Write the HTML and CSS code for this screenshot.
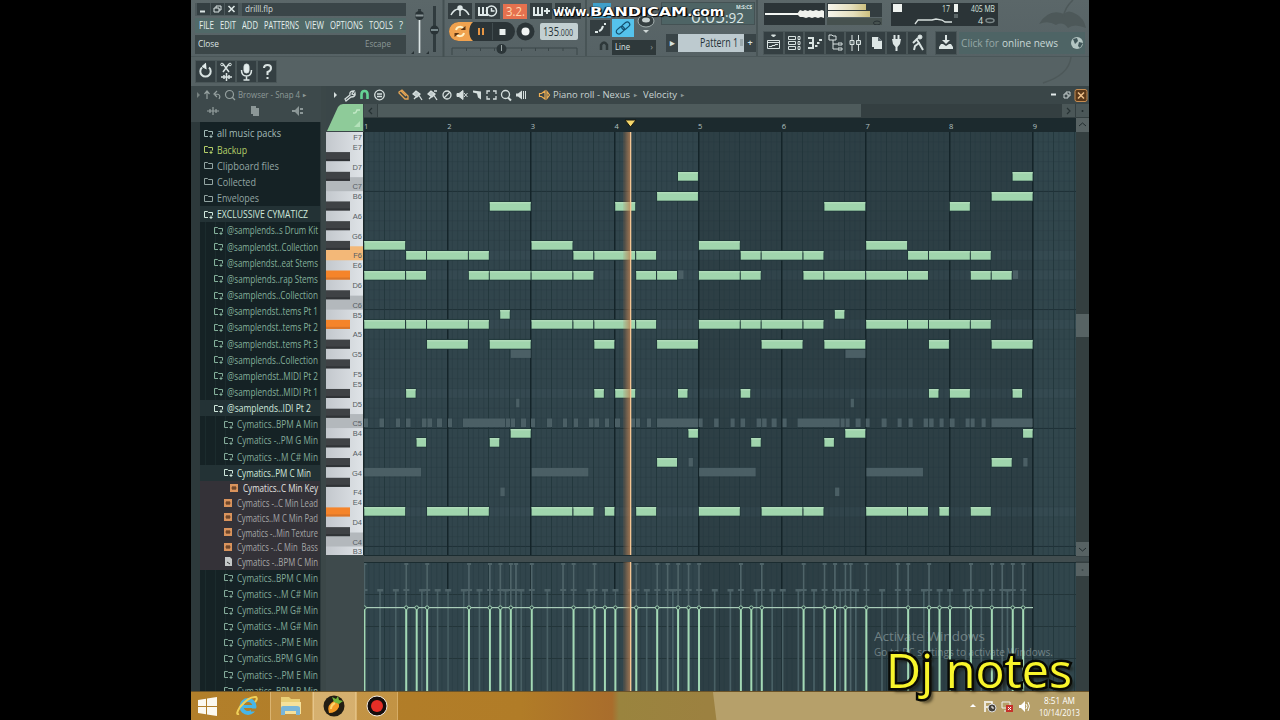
FILE: index.html
```html
<!DOCTYPE html>
<html lang="en">
<head>
    <meta charset="UTF-8">
    <meta name="viewport" content="width=device-width, initial-scale=1.0">
    <title>drilll.flp</title>
    <link rel="stylesheet" href="styles.css">
</head>
<body>
    <div class="desktop">
        <div class="topbar">
            <div class="title-panel">
                <div class="title-row">
                    <svg class="win-btn" viewBox="0 0 13 12"><path d="M3 8.5h5" stroke-width="2"/></svg>
                    <svg class="win-btn" viewBox="0 0 13 12"><path d="M3 5h5v4H3zM5 5V3h5v4H8" /></svg>
                    <svg class="win-btn" viewBox="0 0 13 12"><path d="M3.5 3l6 6M9.5 3l-6 6" stroke-width="1.6"/></svg>
                    <div class="title"><span data-w="28">drilll.flp</span></div>
                </div>
                <div class="menu">
                    <span data-w="15">FILE</span><span data-w="16">EDIT</span><span data-w="16">ADD</span><span data-w="35">PATTERNS</span><span data-w="19">VIEW</span><span data-w="33">OPTIONS</span><span data-w="24">TOOLS</span><span data-w="4">?</span>
                </div>
                <div class="hint"><span data-w="21">Close</span><span class="dim" data-w="26">Escape</span></div>
            </div>
            <svg class="sliders" width="42" height="57">
                <path d="M13.5 9v44M28.5 6v46" stroke="#303b3e" stroke-width="3"/>
                <path d="M13.5 19v34" stroke="#dbe5e5" stroke-width="2"/>
                <circle cx="13.5" cy="15.5" r="4.5" fill="#293336"/><path d="M9.5 15.5h8" stroke="#8b9698" stroke-width="2"/>
                <circle cx="28.5" cy="30" r="4.5" fill="#293336"/><path d="M25 30h7" stroke="#77878a" stroke-width="2"/>
                <path d="M5 54l3-3v3M20 54l3-3v3" fill="#273134"/>
                <path d="M37.5 0v57" stroke="#445052" stroke-width="2"/>
            </svg>
            <div class="transport">
                <div class="row1">
                    <svg class="tbtn" width="24" height="16"><path d="M3 12Q6 6 11 6M21 12Q18 6 13 6M12 13V6" /><circle cx="12" cy="5" r="2" fill="#dfe9e9"/></svg>
                    <svg class="tbtn" width="25" height="16"><path d="M4 4v8h8V4M8 4v8" stroke-width="2"/><circle cx="16.5" cy="8" r="5"/><path d="M16.5 5v3h3"/></svg>
                    <div class="countdown"><span data-w="19">3.2.</span></div>
                    <svg class="tbtn" width="22" height="16"><path d="M4 4v8h8V4M8 4v8M14 8h6M17 5v6" stroke-width="2"/></svg>
                    <svg class="tbtn" width="26" height="16"><path d="M4 4v8h8V4M8 4v8M14 12l6-8" stroke-width="2"/></svg>
                </div>
                <div class="row2">
                    <svg width="66" height="19">
                        <rect width="66" height="19" rx="9.5" fill="#2b3437"/>
                        <path d="M9.5 0H24c-5 4-5 15 0 19H9.5a9.5 9.5 0 0 1 0-19" fill="#f0a24f"/>
                        <path d="M7 8c1-4 6-4 8-1M15 11c-1 4-6 4-8 1" stroke="#fff3c8" fill="none" stroke-width="2"/>
                        <path d="M11.5 8h5V4zM10.5 11h-5v4z" fill="#5d3513"/>
                        <path d="M30 6v7M34 6v7" stroke="#e79644" stroke-width="2"/>
                        <path d="M43.5 1v17" stroke="#414c4f"/><path d="M50.5 7h6v6h-6z" fill="#e9efee"/>
                    </svg>
                    <svg width="19" height="19"><circle cx="9.5" cy="9.5" r="9" fill="#2b3437"/><circle cx="9.5" cy="9.5" r="4" fill="#f1f4f3"/></svg>
                    <div class="tempo"><span class="bpm" data-w="16">135</span><span class="frac" data-w="14">.000</span></div>
                </div>
                <svg class="songpos" width="136" height="16">
                    <path d="M4 14V7h125v7M18.5 7v3M32.5 7v3M46.5 7v3M73.5 7v3M87.5 7v3M100.5 7v3M115 7v3" fill="none" stroke="#3b4649"/>
                    <circle cx="53.5" cy="8" r="5" fill="#2b3538"/><path d="M53.5 4v6" stroke="#9aa5a5"/>
                </svg>
            </div>
            <div class="snap">
                <div class="row1"><div class="blue-btn"></div></div>
                <div class="row2">
                    <svg class="tbtn" width="20" height="16"><path d="M5 12h3M9 11q3-1 4-5M14 4h2" stroke-width="2"/></svg>
                    <svg class="link" width="22" height="18"><g transform="rotate(-40 11 9)"><rect x="3" y="6.5" width="9" height="5" rx="2.5"/><rect x="10" y="6.5" width="9" height="5" rx="2.5"/></g></svg>
                    <svg width="24" height="22"><ellipse cx="12" cy="4" rx="8" ry="6" fill="#343e40" stroke="#a3afaf"/><ellipse cx="12" cy="3" rx="4" ry="2.5" fill="#c6cfce"/><path d="M9 13h6l-3 3z" fill="#cdd6d5"/></svg>
                </div>
                <div class="row3">
                    <svg width="10" height="12"><path d="M2 10V5q3-5 6 0v5" fill="none" stroke="#2e383a" stroke-width="2.5"/></svg>
                    <div class="line-select"><span data-w="15">Line</span><b>›</b></div>
                </div>
            </div>
            <div class="time-panel">
                <div class="time"><span class="clock" data-w="34">0:05</span><span class="cs" data-w="19">:92</span><i><span data-w="16">M:S:CS</span></i></div>
                <div class="pattern"><b>▸</b><div class="pattern-name"><span data-w="38">Pattern 1</span><em></em></div><b>+</b></div>
            </div>
            <div class="right-panel">
                <div class="monitors">
                    <svg width="61" height="22"><rect width="61" height="22" fill="#2b3437"/><path d="M1 11h34" stroke="#f3f6f3" stroke-width="2"/><path d="M33 11l3-4 3 1 2-1 3 1 2-1 3 1 3-1 3 1 3-1 2 1v7l-3-1-3 1-3-1-3 1-3-1-3 1-3-1-3 0z" fill="#f0f2ee"/></svg>
                    <svg width="55" height="22"><rect width="55" height="14" fill="#333d40"/><rect y="15" width="55" height="7" fill="#46514f"/><rect x="1" y="1" width="38" height="6" fill="url(#m)"/><rect x="1" y="8" width="42" height="6" fill="url(#m)"/><ellipse cx="50" cy="20" rx="3.5" ry="2" fill="none" stroke="#273033"/><defs><linearGradient id="m"><stop stop-color="#f6f5ec"/><stop offset=".6" stop-color="#e5dfbd"/><stop offset="1" stop-color="#cdc07f"/></linearGradient></defs></svg>
                    <div class="cpu">
                        <svg width="62" height="23"><rect x="2" y="1" width="9" height="8" fill="#eef2ef"/><path d="M24 21l3-4h14l4-1 6 1 3 2h7" fill="none" stroke="#d8e0de" stroke-width="1.3"/><text x="51" y="9" textLength="8" lengthAdjust="spacingAndGlyphs">17</text></svg>
                        <svg width="45" height="23"><path d="M1 1h4v8H1z" fill="#eef2ef"/><path d="M1 11h4v4H1z" fill="#5a6567"/><text x="18" y="9" textLength="24" lengthAdjust="spacingAndGlyphs">405 MB</text><text x="25" y="21">4</text><ellipse cx="37" cy="17.5" rx="4" ry="2" fill="none" stroke="#7d898a" stroke-width="1.5"/></svg>
                    </div>
                </div>
                <div class="shortcuts">
                    <svg class="sbtn"><path d="M3.5 8.5h12v8h-12zM3.5 10.5h12M5 14.5h3v-1h3v-1h3"/><path d="M7.5 3h4l-2 2z" fill="#d9e3e2"/></svg>
                    <svg class="sbtn"><path d="M3.5 4.5h7v3h-7zM3.5 9.5h7v3h-7zM3.5 14.5h7v3h-7zM13 4.5h2v3h-2zM13 9.5h2v3h-2zM13 14.5h2v3h-2z"/></svg>
                    <svg class="sbtn"><path d="M3 6h5v10H3M4 11h4" stroke-width="2"/><path d="M10 14h2.5M12 11h2.5M14 8h3" stroke-width="2"/></svg>
                    <svg class="sbtn"><path d="M3 3h3l1 1h3v4H3zM7 8v9h4M7 12h4M12 11h4v2h-4zM12 16h4v2h-4z"/></svg>
                    <svg class="sbtn"><path d="M6 3v16M12.5 3v16"/><path d="M4 8.5h4v4H4zM10.5 8.5h4v4h-4z" fill="#5d6a6c"/></svg>
                    <svg class="sbtn fill"><path d="M5 5h6l4 4v8H7v-2H5z"/><path d="M11 5v4h4" fill="#59656a"/></svg>
                    <svg class="sbtn fill"><path d="M5 7h9l-1 5-2.5 3v4h-2v-4L6 12zM6.5 3h2v4h-2zM10.5 3h2v4h-2z"/></svg>
                    <svg class="sbtn"><circle cx="12" cy="5" r="2" fill="#dde6e5"/><path d="M10 6l-5 5M9 8l2 3-4 3-1 4M11 11l4 7" stroke-width="2"/></svg>
                    <svg class="sbtn fill download"><path d="M9 3h2v5h3l-4 4-4-4h3zM5 12l-2 3v2h14v-2l-2-3h-2l-3 2-3-2z"/></svg>
                    <div class="news"><span data-w="38">Click for</span><span class="lit" data-w="56">online news</span><svg width="14" height="14"><circle cx="7" cy="7" r="6" fill="#b4c6c3"/><path d="M3 3l4-1 1 3-3 3zM9 6l4 1-3 5-2-2z" fill="#41575a"/></svg></div>
                </div>
            </div>
            <svg class="leaf" width="54" height="85"><path d="M4 24q10-16 25-10 4-5 12 0 8 4 10 14-12-5-18 0-5-7-12-3-8-5-17-1z" fill="#4d5859"/><path d="M28 18Q30 7 38 0M8 83Q34 75 36 57" stroke="#4d5859" stroke-width="1.5" fill="none"/></svg>
            <div class="watermark"><span data-w="37">www.</span><span class="big" data-w="97">BANDICAM</span><span data-w="37">.com</span></div>
        </div>

        <div class="toolbar">
            <svg class="sbtn tool"><path d="M6 6.5a5.2 5.2 0 1 0 7 0" stroke-width="2"/><path d="M10 2L6 5.5 10.5 8" fill="#e3ecec"/></svg>
            <svg class="sbtn tool"><path d="M6 3l6 8M12 3l-6 8M4 16h11M7 14v4M9.5 12v8M12 14v4" stroke-width="1.5"/><circle cx="5" cy="3.5" r="1.3"/><circle cx="13" cy="3.5" r="1.3"/></svg>
            <svg class="sbtn tool"><rect x="7" y="3" width="5" height="9" rx="2.5" fill="#e3ecec"/><path d="M4.5 9q0 6 5 6t5-6M9.5 15v4M6.5 19h6" stroke-width="1.5"/></svg>
            <svg class="sbtn tool"><path d="M6 7q0-3 3.5-3T13 7t-3.5 4v3M9.5 16v2" stroke-width="2"/></svg>
        </div>

        <div class="main">
            <div class="browser">
                <div class="browser-head">
                    <div class="browser-title">
                        <svg width="42" height="14"><path d="M2 4l3 3-3 3z" fill="#75807f"/><path d="M12 11V3M9.5 6L12 3l2.5 3M24 11q3-5-4-5M22 3l-3 3 3 3" class="ico"/><circle cx="34.5" cy="6.5" r="4" class="ico"/><path d="M37 9l3 3" class="ico"/></svg>
                        <span data-w="62">Browser - Snap 4</span><b>▸</b>
                    </div>
                    <div class="browser-tabs">
                        <svg width="14" height="12"><path d="M1 6h12M4 4v4M7 2v8M10 4v4" class="ico"/></svg>
                        <svg width="12" height="12"><path d="M1 1h5v2h3v8H3V9H1z" fill="#8c9797"/></svg>
                        <svg width="14" height="12"><path d="M1 5h3l4-4v10L4 7H1zM9 3h3v2H9zM9 7h3v2H9z" fill="#8c9797"/></svg>
                    </div>
                </div>
                <div class="list" id="list"></div>
            </div>

            <div class="roll">
                <div class="roll-head">
                    <svg width="212" height="18">
                        <g fill="none" stroke="#d5dedd" stroke-width="1.3">
                            <path d="M8 6l3 3-3 3z" fill="#d5dedd" stroke="none"/>
                            <path d="M19 13l5-4q-1-4 4-4l-2 3 2 1 1-2q1 4-4 4l-5 4z"/>
                            <path d="M35.5 13V8.5q0-3.5 3-3.5t3 3.5V13" stroke="#65d494" stroke-width="2.6"/>
                            <circle cx="53.5" cy="9" r="4.8"/><path d="M51 8h5M51 10.5h5"/>
                            <path d="M73 6l3-2 6 6v3h-3l-6-6zM75 5l5 5" stroke="#e3a454"/>
                            <path d="M87 8l3-3 4 3-3 3zM92 8l4 6M88 13l3-3" fill="#bdc8c8"/>
                            <path d="M102 8l3-3 4 3-3 3zM107 8l4 6M103 13l3-3M108 5h3" fill="#bdc8c8"/>
                            <circle cx="121" cy="9" r="4"/><path d="M118 12l6-6"/>
                            <path d="M131 7.5h2l4-3v9l-4-3h-2zM138 7l3.5 4M141.5 7l-3.5 4" fill="#d5dedd" stroke-width="1"/>
                            <path d="M147 4.5l8 1v8l-3-2-1-4-4-1z" fill="#d5dedd" stroke-width="0"/>
                            <path d="M161 8V5h3M167 5h3v3M170 10v3h-3M164 13h-3v-3"/>
                            <circle cx="179.5" cy="8.5" r="4"/><path d="M182 11.5l3 3" stroke-width="2"/>
                            <path d="M190 7.5h2l4-3v9l-4-3h-2z" fill="#d5dedd" stroke-width="0"/><path d="M197.5 5v8M199.5 5v8" stroke-width="1"/>
                        </g>
                    </svg>
                    <svg width="14" height="18"><path d="M1.5 7.5h2L7 5v8l-3.5-2.5h-2zM9 5.5L11.5 9 9 12.5z" fill="none" stroke="#f0b053" stroke-width="1.2"/></svg>
                    <span data-w="77">Piano roll - Nexus</span><b>▸</b><span data-w="34">Velocity</span><b>▸</b>
                    <svg class="roll-win" width="40" height="18"><path d="M3 8.5h5" stroke="#e3eaea" stroke-width="2"/><path d="M16 8h4v4h-4zM18 8V6h4v4h-2" fill="none" stroke="#c9d2d2"/><rect x="27" y="3.5" width="12" height="12" rx="2" fill="#5a3819" stroke="#c58b50"/><path d="M30 6.5l6 6M36 6.5l-6 6" stroke="#f0c089" stroke-width="1.5"/></svg>
                </div>
                <div class="roll-body">
                    <svg id="keys" width="38" height="587"></svg>
                    <svg id="grid" width="712" height="587"></svg>
                    <svg class="vscroll" width="13" height="587">
                        <rect width="13" height="587" fill="#343f40"/>
                        <rect width="13" height="13" fill="#4b5758"/><circle cx="6.5" cy="7" r="1" fill="#202b2d"/>
                        <rect y="14" width="13" height="14" fill="#576263"/><path d="M3 22l3.5-3 3.5 3" fill="none" stroke="#202b2d"/>
                        <rect y="210" width="13" height="23" fill="#576364"/>
                        <rect y="438" width="13" height="14" fill="#576263"/><path d="M3 444l3.5 3 3.5-3" fill="none" stroke="#202b2d"/>
                        <path d="M0 455h13" stroke="#414d4f" stroke-width="5"/>
                        <rect y="459" width="13" height="13" fill="#576263"/><circle cx="6.5" cy="466" r="1" fill="#3a4648"/>
                    </svg>
                </div>
            </div>
        </div>

        <div class="taskbar">
            <svg class="task" width="41" height="29"><path d="M7 8l8-1.200V14H7zM16 6.600L26 5v9H16zM7 15h8v7.200L7 21zM16 15h10v9l-10-1.600z" fill="#fbf8ef"/></svg>
            <svg class="task" width="38" height="29"><circle cx="16" cy="14.5" r="6.5" fill="none" stroke="#48b6e8" stroke-width="4"/><path d="M10 14.5h14" stroke="#48b6e8" stroke-width="3"/><path d="M19 16.5h8v3h-8z" fill="#b17e29"/><path d="M7 22Q3 23 8 15 17 4 24 5q2 2-1 5" fill="none" stroke="#f0d15a" stroke-width="2"/></svg>
            <svg class="task open" width="43" height="28"><path d="M10 5h8l2 2h9v15H10z" fill="#e9cf77"/><path d="M10 10h20v12H10z" fill="#f5e19b"/><path d="M10 23v-7q0-2 2-2h14q3 0 3 2v7h-4v-4H14v4z" fill="#79b6d9"/></svg>
            <svg class="task open active" width="43" height="28"><circle cx="20" cy="14" r="10.5" fill="#231d13"/><path d="M15 21q-3-8 5-12 6 1 5 6-3 6-10 6" fill="#f39a26"/><path d="M17 17q0-4 4-6" stroke="#fbd46c" stroke-width="2" fill="none"/><path d="M20 10l-2-5 4 2 2-3 1 4 4 1-4 3z" fill="#72b63b"/></svg>
            <svg class="task open" width="42" height="28"><circle cx="20" cy="14" r="10" fill="#150d0c" stroke="#f1e9de"/><circle cx="20" cy="14" r="6" fill="#e52e26"/></svg>
            <div class="tray">
                <svg width="62" height="18"><path d="M2 10l3-3 3 3z" fill="#fff"/><path d="M17 4v11M18 5h6v5h-6" stroke="#fff" stroke-width="1.5" fill="none"/><circle cx="24" cy="11" r="4" fill="#44403a" stroke="#ddd"/><path d="M24 9v2h2" stroke="#fff" fill="none"/><path d="M34 5h8v6h-8zM36 14h5" stroke="#eee" fill="none"/><rect x="38" y="8" width="7" height="7" fill="#c6322b"/><path d="M40 10l3 3M43 10l-3 3" stroke="#fff"/><path d="M51 8h2l4-4v11l-4-4h-2z" fill="#fff"/><path d="M58 7q2 2 0 5M60 5q3 4 0 9" stroke="#fff" fill="none"/></svg>
                <div class="date"><span data-w="31">8:51 AM</span><span data-w="41">10/14/2013</span></div>
            </div>
        </div>

        <div class="activate"><p><span data-w="111">Activate Windows</span></p><p class="small"><span data-w="179">Go to PC settings to activate Windows.</span></p></div>
        <div class="caption"><span data-w="186">Dj notes</span></div>
    </div>
    <script src="script.js"></script>
</body>
</html>
```

FILE: styles.css
```css
body {
    margin: 0;
    background: #000;
    font-family: "Open Sans", "Noto Sans", sans-serif;
    overflow: hidden;
}
span[data-w] {
    display: inline-block;
    white-space: nowrap;
    transform-origin: 0 50%;
}
svg {
    display: block;
    flex: none;
}
p {
    margin: 0;
}
.desktop {
    position: relative;
    width: 898px;
    height: 720px;
    margin-left: 191px;
    background: #566264;
    overflow: hidden;
}

/* top bar */
.topbar {
    position: relative;
    display: flex;
    box-sizing: border-box;
    height: 57px;
    padding-left: 4px;
    background: linear-gradient(#5b6769, #566265);
    border-bottom: 1px solid #4b5759;
}
.title-panel {
    width: 211px;
    padding-top: 3px;
}
.title-row {
    display: flex;
    gap: 1px;
    height: 13px;
    padding-left: 2px;
    background: #4c585b;
}
.win-btn {
    width: 13px;
    height: 12px;
    background: #343f42;
    fill: none;
    stroke: #dbe5e4;
}
.title {
    flex: 1;
    margin-left: 3px;
    padding-left: 3px;
    background: #3a4548;
    color: #d3dddc;
    font-size: 9px;
    line-height: 12px;
}
.menu {
    display: flex;
    gap: 6px;
    height: 15px;
    margin-top: 2px;
    padding: 0 0 0 4px;
    background: #516968;
    color: #e4efec;
    font-size: 11px;
    line-height: 14px;
}
.hint {
    display: flex;
    justify-content: space-between;
    height: 19px;
    margin-top: 2px;
    padding: 0 15px 0 3px;
    background: #3b4648;
    color: #dde5e4;
    font-size: 9px;
    line-height: 18px;
}
.dim {
    color: #8b9797;
}
.transport {
    width: 137px;
    padding-top: 3px;
}
.row1,
.row2,
.row3 {
    display: flex;
    align-items: center;
}
.row1 {
    height: 16px;
    gap: 3px;
}
.row2 {
    height: 19px;
    margin-top: 3px;
}
.tbtn {
    background: #333d40;
    fill: none;
    stroke: #dfe9e9;
    stroke-width: 1.5px;
}
.countdown {
    width: 24px;
    height: 15px;
    padding-left: 3px;
    box-sizing: border-box;
    background: #e5714f;
    color: #ffd9b0;
    font-size: 13px;
    line-height: 14px;
}
.transport .row2 svg {
    margin-left: 1px;
}
.tempo {
    display: flex;
    width: 38px;
    height: 17px;
    margin-left: 5px;
    padding-left: 3px;
    box-sizing: border-box;
    border-radius: 2px;
    background: #c3d0d2;
    color: #273236;
    font-size: 13px;
    line-height: 16px;
}
.tempo .frac {
    font-size: 9px;
    line-height: 19px;
}
.snap {
    width: 74px;
    padding-top: 2px;
    border-left: 2px solid #485456;
}
.blue-btn {
    width: 18px;
    height: 15px;
    margin-left: 6px;
    background: #3f9fca;
}
.snap .row2 {
    margin-top: 0;
    padding-left: 3px;
}
.link {
    margin-left: 2px;
    background: #55c3ec;
    fill: none;
    stroke: #15506f;
    stroke-width: 1.2px;
}
.row3 {
    gap: 3px;
    padding-left: 12px;
}
.line-select {
    display: flex;
    justify-content: space-between;
    width: 38px;
    height: 15px;
    margin-top: 3px;
    padding: 0 3px;
    background: #2e383a;
    color: #dce5e4;
    font-size: 9px;
    line-height: 14px;
}
.line-select b {
    color: #8a9696;
    font-weight: normal;
}
.time-panel {
    width: 95px;
    padding-top: 2px;
}
.time {
    display: flex;
    position: relative;
    height: 23px;
    width: 94px;
    padding-left: 29px;
    box-sizing: border-box;
    background: #4e6465;
    border: 1px solid #445254;
    color: #dbe7e6;
    font-size: 19px;
    line-height: 26px;
}
.time .cs {
    font-size: 15px;
    line-height: 28px;
}
.time i {
    position: absolute;
    top: 1px;
    right: 2px;
    font: bold 6px/6px "Open Sans", sans-serif;
}
.pattern {
    display: flex;
    align-items: center;
    height: 19px;
    margin: 8px 0 0 5px;
}
.pattern b {
    width: 12px;
    height: 18px;
    background: #394447;
    color: #d8e1e0;
    font-size: 9px;
    line-height: 17px;
    text-align: center;
}
.pattern-name {
    display: flex;
    justify-content: flex-end;
    gap: 2px;
    width: 66px;
    height: 18px;
    background: #bdcacf;
    color: #253136;
    font-size: 12px;
    line-height: 17px;
}
.pattern em {
    width: 3px;
    height: 7px;
    margin: 5px 1px 0 0;
    background: #9ba9ad;
}
.right-panel {
    flex: 1;
    padding: 3px 0 0 6px;
    border-left: 2px solid #485456;
}
.monitors {
    display: flex;
    gap: 2px;
}
.cpu {
    display: flex;
    margin-left: 7px;
    background: #2b3437;
    font-size: 9px;
    fill: #d7e0df;
}
.shortcuts {
    display: flex;
    gap: 2px;
    height: 22px;
    margin-top: 6px;
}
.sbtn {
    width: 18.5px;
    height: 22px;
    background: #343f42;
    fill: none;
    stroke: #d9e3e2;
    outline: 1px solid #4a5658;
}
.fill {
    fill: #dde6e5;
    stroke: none;
}
.download {
    margin-left: 8px;
    width: 20px;
}
.news {
    display: flex;
    gap: 3px;
    align-items: center;
    width: 124px;
    margin-left: 1px;
    padding-left: 2px;
    background: #4e6465;
    color: #96a8a6;
    font-size: 10px;
}
.news .lit {
    color: #c9d8d6;
}
.news svg {
    margin-left: 9px;
}
.leaf {
    position: absolute;
    top: 0;
    right: 0;
    height: 85px;
    pointer-events: none;
}
.watermark {
    position: absolute;
    left: 362px;
    top: 2px;
    display: flex;
    color: #fff;
    font: bold 12.5px/20px "DejaVu Sans", sans-serif;
    text-shadow: 0 0 1px #000, 1px 1px 1px #000, -1px 0 1px #000;
}

.toolbar {
    display: flex;
    gap: 2px;
    height: 25px;
    padding: 4px 0 0 5px;
    background: #566264;
}
.toolbar .tool {
    height: 21px;
}

.main {
    display: flex;
    height: 605px;
}

/* browser */
.browser {
    width: 130px;
    border-right: 5px solid #3b4748;
    background: #2d393b;
    overflow: hidden;
}
.browser-head {
    height: 36px;
    background: #3d494b;
}
.browser-title {
    display: flex;
    align-items: center;
    height: 17px;
    padding-left: 4px;
    color: #8d9998;
    font-size: 9px;
}
.browser-title span {
    margin-left: 1px;
}
.browser-title b {
    margin-left: 3px;
    font-size: 6px;
}
.browser-tabs {
    display: flex;
    justify-content: space-between;
    padding: 2px 16px 0 15px;
}
.ico {
    fill: none;
    stroke: #95a09f;
    stroke-width: 1.2px;
}
.list {
    height: 566px;
    margin: 0 1px 0 9px;
    padding-top: 3.4px;
    background: #152225;
    color: #93a5a3;
    font-size: 11px;
}
.item {
    display: flex;
    align-items: center;
    box-sizing: border-box;
    height: 16.16px;
    line-height: 16px;
}
.item svg {
    margin-right: 4px;
}
.folder {
    fill: none;
    stroke: currentColor;
}
.level0 { padding-left: 4px; }
.level1 { padding-left: 14px; color: #84b09b; }
.level2 { padding-left: 24px; color: #84aa9a; }
.level3 { padding-left: 30px; }
.nested {
    background: repeating-linear-gradient(90deg, #1b2b2d 0 1px, transparent 1px 10px) 5px 0 / 22px 100% no-repeat;
}
.backup { color: #b4cf69; }
.soft { color: #a2bab6; }
.current {
    background: #233235;
    color: #d0e8dd;
}
.file {
    height: 14.8px;
    background: #343238;
    color: #a5a6a7;
}
.selected { color: #e3e3e1; }

/* piano roll */
.roll {
    width: 763px;
    background: #3a4648;
}
.roll-head {
    display: flex;
    align-items: center;
    position: relative;
    height: 18px;
    background: #3a4648;
    color: #c8d3d2;
    font-size: 9px;
}
.roll-head span {
    margin: -2px 0 0 1px;
}
.roll-head b {
    margin: -1px 4px 0 4px;
    width: 4px;
    font-size: 6px;
    color: #899595;
}
.roll-win {
    margin-left: auto;
    margin-right: 1px;
}
.roll-body {
    display: flex;
    height: 587px;
}
#keys text {
    font: 7.5px "Liberation Sans", Arial, sans-serif;
    fill: #565d63;
    text-anchor: end;
}
#grid text {
    font-size: 7.5px;
    fill: #b3c0c0;
}

/* windows taskbar */
.taskbar {
    display: flex;
    box-sizing: border-box;
    height: 29px;
    border-top: 1px solid #6c5429;
    background: linear-gradient(83deg, transparent 521px, #b6a06a 522px),
        linear-gradient(90deg, #b27f2a, #b17c27 330px, #a96d2c 421px, #9a843e 428px, #9c8140 515px);
}
.open {
    background: rgba(240, 205, 145, 0.28);
    border-left: 1px solid rgba(255, 230, 180, 0.4);
    border-right: 1px solid rgba(255, 230, 180, 0.3);
    box-sizing: border-box;
}
.active {
    background: rgba(250, 225, 180, 0.5);
}
.tray {
    display: flex;
    margin-left: auto;
    padding-right: 9px;
    gap: 9px;
}
.tray svg {
    margin-top: 5px;
}
.date {
    display: flex;
    flex-direction: column;
    align-items: center;
    color: #fff;
    font-size: 9px;
    line-height: 12px;
    padding-top: 3px;
}

.activate {
    position: absolute;
    left: 683px;
    top: 628px;
    color: rgba(180, 195, 196, 0.5);
    font-size: 13px;
    line-height: 17px;
}
.activate .small {
    font-size: 10px;
    line-height: 14px;
}
.caption {
    position: absolute;
    left: 695px;
    top: 638px;
    color: #f8f52b;
    font-size: 48px;
    font-weight: 500;
    line-height: 64px;
    -webkit-text-stroke: 5px #080a06;
    paint-order: stroke fill;
    text-shadow: 4px 4px 3px rgba(20, 18, 8, 0.6);
}
```

FILE: script.js
```js
// ---- browser list: level, kind, label, width, extra class ----
const items = [
    [0, "add", "all music packs", 64, "soft"],
    [0, "add", "Backup", 30, "backup"],
    [0, "dir", "Clipboard files", 62, ""],
    [0, "dir", "Collected", 39, ""],
    [0, "dir", "Envelopes", 42, ""],
    [0, "add", "EXCLUSSIVE CYMATICZ", 91, "current"],
    [1, "add", "@samplends..s Drum Kit", 91, ""],
    [1, "add", "@samplendst..Collection", 91, ""],
    [1, "add", "@samplendst..eat Stems", 91, ""],
    [1, "add", "@samplends..rap Stems", 91, ""],
    [1, "add", "@samplends..Collection", 91, ""],
    [1, "add", "@samplendst..tems Pt 1", 91, ""],
    [1, "add", "@samplendst..tems Pt 2", 91, ""],
    [1, "add", "@samplendst..tems Pt 3", 91, ""],
    [1, "add", "@samplends..Collection", 91, ""],
    [1, "add", "@samplendst..MIDI Pt 2", 91, ""],
    [1, "add", "@samplendst..MIDI Pt 1", 91, ""],
    [1, "add", "@samplends..IDI Pt 2", 84, "current"],
    [2, "add", "Cymatics..BPM A Min", 81, ""],
    [2, "add", "Cymatics -..PM G Min", 81, ""],
    [2, "add", "Cymatics -..M C# Min", 81, ""],
    [2, "add", "Cymatics..PM C Min", 74, "current"],
    [3, "wav", "Cymatics..C Min Key", 75, "file selected"],
    [2, "wav", "Cymatics -..C Min Lead", 81, "file"],
    [2, "wav", "Cymatics..M C Min Pad", 81, "file"],
    [2, "wav", "Cymatics -..Min Texture", 81, "file"],
    [2, "wav", "Cymatics -..C Min &nbsp;Bass", 81, "file"],
    [2, "mid", "Cymatics -..BPM C Min", 81, "file"],
    [2, "add", "Cymatics..BPM C Min", 81, ""],
    [2, "add", "Cymatics -..M C# Min", 81, ""],
    [2, "add", "Cymatics..PM G# Min", 81, ""],
    [2, "add", "Cymatics -..M G# Min", 81, ""],
    [2, "add", "Cymatics -..PM E Min", 81, ""],
    [2, "add", "Cymatics..BPM G Min", 81, ""],
    [2, "add", "Cymatics -..PM E Min", 81, ""],
    [2, "add", "Cymatics..BPM B Min", 81, ""]
];
const icons = {
    dir: '<svg class="folder" width="9" height="9"><path d="M.5 1.5h3l1 1h4v5h-8z"/></svg>',
    add: '<svg class="folder" width="9" height="9"><path d="M4 7.5H.5v-6h3l1 1h4v3M7 5.5v3.5M5.5 7.5h3"/></svg>',
    wav: '<svg width="9" height="9"><rect width="8" height="8" fill="#d9935c"/><path d="M1.5 4h5M3 2v4M5 2v4" stroke="#4e2e1a"/></svg>',
    mid: '<svg width="9" height="10"><path d="M1 0h5l2 2v7H1z" fill="#c5c8c8"/><path d="M3 5l3 2" stroke="#333"/></svg>'
};
document.getElementById("list").innerHTML = items.map(([lv, kind, label, w, cls]) =>
    `<div class="item level${lv} ${lv && !cls ? "nested" : ""} ${cls}">${icons[kind]}<span data-w="${w}">${label}</span></div>`
).join("");

// squeeze every label to its own width
document.querySelectorAll("span[data-w]").forEach(el => {
    const natural = el.getBoundingClientRect().width;
    el.style.width = el.dataset.w + "px";
    el.style.transform = `scaleX(${el.dataset.w / natural})`;
});

const rect = (x, y, w, h, fill, extra = "") =>
    `<rect x="${x}" y="${y}" width="${w}" height="${h}" fill="${fill}" ${extra}/>`;

const ROW = 9.87;       // height of one semitone
const C5 = 319;         // centre of the C5 row
const rowY = n => C5 - n * ROW;

// ---- keyboard ----
const names = { 0: "C", 2: "D", 4: "E", 5: "F", 7: "G", 9: "A", 11: "B" };
const lit = [15, 10, -9];
let keys = '<defs><linearGradient id="kb"><stop stop-color="#c3c8cd"/><stop offset="1" stop-color="#e0e4e8"/></linearGradient></defs>';
keys += rect(0, 28, 38, 423, "url(#kb)");
for (let n = 29; n >= -13; n--) {
    const pc = ((n % 12) + 12) % 12;
    const y = rowY(n) - ROW / 2;
    if (pc === 0) keys += rect(0, y - 4, 38, 14, "#b3b8bc");
    if (n === 17) keys += rect(0, y - 4, 38, 14, "#f3b878");
}
for (let n = 29; n >= -13; n--) {
    const pc = ((n % 12) + 12) % 12;
    const y = rowY(n) - ROW / 2;
    if (names[pc]) {
        const oct = 5 + Math.floor(n / 12);
        if (n > -13) keys += `<text x="36" y="${y + 8.2}">${names[pc]}${oct}</text>`;
    } else {
        keys += rect(0, y + 0.5, 24, 9, lit.includes(n) ? "#f5842a" : "#3f4245");
        keys += rect(0, y + 7.5, 24, 2, lit.includes(n) ? "#d9752a" : "#303336");
    }
}
keys += `<text x="36" y="450">B3</text>`;
keys += rect(0, 451, 38, 136, "#3e4a4c") + rect(37, 28, 1, 423, "#1b2729");
keys += '<path d="M1 27L12 3Q14 0 17 0H37V27z" fill="#8ecb99"/><path d="M27 9h2q1 0 2-3h3" fill="none" stroke="#c2e9c6" stroke-width="1.5"/><path d="M28 23h6v-6z" fill="#b4e2ba"/>';
document.getElementById("keys").innerHTML = keys;

// ---- note grid, times in eighths of a bar ----
const U = 10.457;
const notes = {
    25: [[30, 2]],
    23: [[28, 4]],
    22: [[12, 4], [24, 2]],
    18: [[0, 4], [16, 4]],
    17: [[4, 2], [6, 4], [10, 2], [20, 2], [22, 4], [26, 2]],
    15: [[0, 4], [4, 2], [10, 2], [12, 4], [16, 4], [20, 2], [26, 2], [28, 2]],
    11: [[13, 1]],
    10: [[0, 4], [4, 2], [6, 4], [10, 2], [16, 4], [20, 2], [22, 4], [26, 2]],
    8: [[6, 4], [12, 4], [22, 2], [28, 4]],
    3: [[4, 1], [22, 1], [24, 2], [30, 1]],
    "-1": [[14, 2], [31, 1]],
    "-2": [[5, 1], [12, 1]],
    "-4": [[28, 2]],
    "-9": [[0, 4], [6, 4], [10, 2], [16, 4], [20, 2], [23, 1], [26, 2]]
};
const ghosts = [[15, 30, .6], [7, 14, 2], [2, 14.5, .4], [-4, 31, .5], [-5, 0, 5.5], [-5, 16, 5.5], [-7, 13, .5]];
// ghost drum hits on C5: x, width
const drums = [[0, 4], [15.5, 4.5], [32, 4], [42, 4.5], [58, 4.5], [63.5, 4.5], [73, 5], [84, 4], [99, 42], [142, 4], [147, 4], [157, 5],
    [167, 4], [183, 5], [199, 4], [210, 4], [225, 4.5], [230.5, 4.5], [241, 4], [251, 5], [267, 4], [272, 4], [283, 4], [293, 41]];

let g = rect(0, 0, 712, 587, "#2d3f45") + rect(0, 28, 335, 559, "#31454c") + rect(670, 28, 42, 559, "#31464c");
for (const n of [17, 15, 10, 3, -9]) g += rect(0, rowY(n) - 5, 712, 10, "#4a6067", 'opacity=".18"');
for (let n = 29; n >= -13; n--) g += rect(0, rowY(n) + 4.5, 712, 1, "#27393f", 'opacity=".25"');
for (const n of [24, 12, 0, -12]) g += rect(0, Math.round(rowY(n) + 4.5), 712, 1, "#1f3137");
for (const y of [490, 522, 554]) g += rect(0, y, 712, 1, "#233539");
for (let i = 0; i <= 136; i++) {
    const x = i * U / 2;
    if (i % 16 === 0) g += rect(Math.round(x) - 1, 28, 1.5, 559, "#142429");
    else if (i % 4 === 0) g += rect(Math.round(x) - 1, 28, 1, 559, "#213439", 'opacity=".8"');
    else g += rect(x - 1, 28, 1, 559, "#263a40", 'opacity=".45"');
}
for (const off of [0, 32 * U]) {
    for (const [n, s, l] of ghosts) g += rect(off + s * U + .5, rowY(n) - 4.5, l * U - 1, 8.5, "#4b5f65");
    for (const [x, w] of drums) g += rect(off + x, rowY(0) - 4.5, w, 8.5, "#4b5f65");
    for (const n in notes) {
        for (const [s, l] of notes[n]) {
            const x = off + s * U - .2, y = Math.round(rowY(+n) - 4.35);
            g += rect(x - .3, y - .8, l * U + .6, 10.3, "#21383a");
            g += rect(x + .5, y, l * U - 1, 8.7, "#a0d5ad") + rect(x + .5, y, l * U - 1, 1.5, "#b0dcb9");
        }
    }
}

// velocity lane
g += rect(0, 451, 712, 7, "#414d4f") + rect(0, 451, 712, 1, "#1b2c30") + rect(0, 458, 712, 1, "#1b2c30");
const tall = [0, 4, 6, 10, 12, 13, 14, 14.5, 16, 19, 20, 22, 26, 28, 29, 30, 31];
const low = [1.5, 3, 5.5, 7, 8, 9.5, 11, 13.5, 15, 17.5, 21.5, 23, 24, 25.5, 27, 29.5];
const stems = [0, 4, 5, 6, 10, 12, 13, 14, 16, 20, 22, 23, 24, 26, 28, 30, 31];
for (const off of [0, 32]) {
    for (const t of tall) g += rect((off + t) * U - .5, 459, 1.7, 128, "#4f6469") + rect((off + t) * U - 1.5, 459, 4, 2, "#4f6469");
    for (const t of low) g += rect((off + t) * U - .5, 486, 1.7, 101, "#496065") + rect((off + t) * U - 2.5, 485, 6, 2.5, "#4e6368");
    for (const t of tall) g += rect((off + t) * U - 2.5, 485, 6, 2, "#4e6368");
}
g += rect(0, 503, 669, 1.2, "#a9cdb9");
for (const off of [0, 32]) {
    for (const t of stems) {
        const x = (off + t) * U + .4;
        g += rect(x - 1, 505, 2, 82, "#a3d9b5");
        g += `<circle cx="${x}" cy="503.7" r="1.8" fill="#2d4147" stroke="#9ccdad"/>`;
    }
}

// playhead
g += '<defs><linearGradient id="ph"><stop stop-color="#b8794a" stop-opacity=".1"/><stop offset="1" stop-color="#c08353" stop-opacity=".75"/></linearGradient></defs>';
g += rect(259, 28, 7, 423, "url(#ph)") + rect(266, 28, 1.3, 423, "#f3c594");
g += rect(259, 458, 7, 129, "url(#ph)") + rect(266, 458, 1.3, 129, "#f3c594");

// scrollbar and ruler
g += rect(0, 0, 712, 14, "#343f41") + rect(14, 0, 483, 13, "#4e5b5c") + rect(0, 0, 13, 13, "#465254") + rect(698, 0, 13, 13, "#4b5758");
g += '<path d="M8 4L5 7l3 3M703 4l3 3-3 3" fill="none" stroke="#263133" stroke-width="1.2"/>';
g += rect(0, 14, 712, 14, "#1c2a2e");
for (let b = 0; b < 9; b++) g += `<text x="${b * 8 * U - (b ? .5 : 0)}" y="24.5">${b + 1}</text>`;
g += '<path d="M261 16h11l-5.5 7z" fill="#f5d66b" stroke="#1a1a10"/>';
document.getElementById("grid").innerHTML = g;
```
